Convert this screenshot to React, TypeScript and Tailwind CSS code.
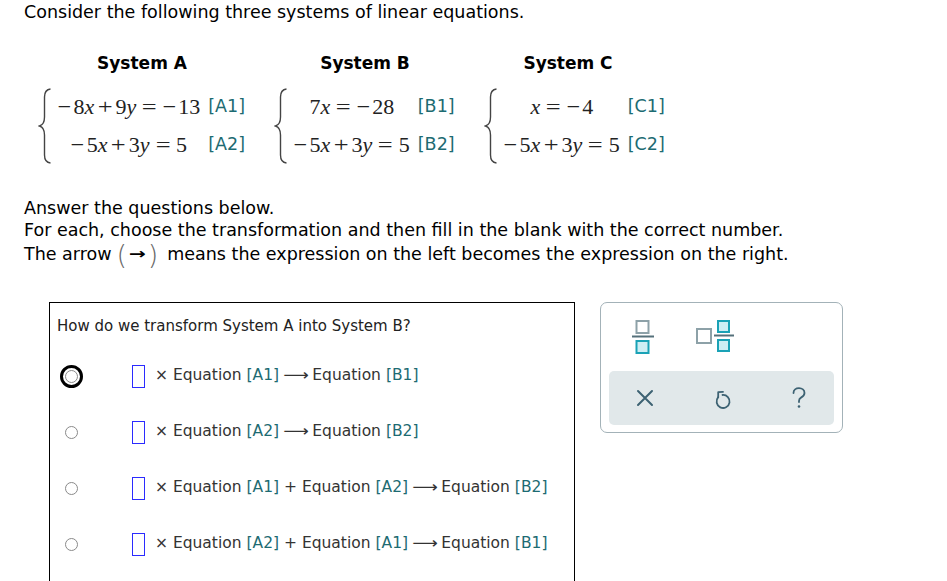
import React from "react";

const V = ({ c }: { c: string }) => <span className="italic">{c}</span>;
const Bin = ({ c }: { c: string }) => (
  <span className="mx-[4.5px] inline-block scale-x-[1.2]">{c}</span>
);
const Rel = ({ c }: { c: string }) => (
  <span className="mx-[7px] inline-block scale-x-[1.2]">{c}</span>
);
const Neg = () => <span className="mr-[3px] inline-block scale-x-[1.1]">−</span>;

const Brace = () => (
  <svg width="14" height="76" viewBox="0 0 14 76" className="shrink-0">
    <path
      d="M12.5 1 C8 1.5 6.5 4 6.5 9 L6.5 29 C6.5 34 5 37 1.5 38 C5 39 6.5 42 6.5 47 L6.5 67 C6.5 72 8 74.5 12.5 75"
      fill="none"
      stroke="#444"
      strokeWidth="1.4"
    />
  </svg>
);

const Lbl = ({ c }: { c: string }) => (
  <span className="text-[#1d6b72] text-[17.5px] font-['DejaVu_Sans',sans-serif]">{c}</span>
);

function SystemBlock({
  title,
  width,
  ml,
  rows,
}: {
  title: string;
  width: string;
  ml: string;
  rows: [React.ReactNode, string][];
}) {
  return (
    <div className={`${width} ${ml} shrink-0 flex flex-col items-center`}>
      <div className="h-[20px] leading-[20px] text-[17px] font-bold text-black whitespace-nowrap">{title}</div>
      <div className="mt-[15px] flex w-full items-stretch">
        <Brace />
        <div className="ml-[6px] grid grid-cols-[auto_auto] gap-x-[8px]">
          {rows.map(([eq, l], i) => (
            <React.Fragment key={i}>
              <div className="h-[37px] flex items-center justify-center font-['Liberation_Serif',serif] text-[22px] text-[#222] whitespace-nowrap">
                {eq}
              </div>
              <div className="h-[37px] flex items-center whitespace-nowrap">
                <Lbl c={l} />
              </div>
            </React.Fragment>
          ))}
        </div>
      </div>
    </div>
  );
}

const T = ({ c }: { c: string }) => <span className="text-[#1d6b72]">{c}</span>;

const Arrow = () => <span className="mx-[5.5px] inline-block scale-x-[1.15]">⟶</span>;

function Radio({ focused }: { focused?: boolean }) {
  return (
    <span className="relative w-[13px] h-[13px] shrink-0">
      <span className="absolute inset-0 rounded-full border border-[#8a8a8a] bg-white" />
      {focused && (
        <span className="absolute left-[-5px] top-[-5px] w-[23px] h-[23px] rounded-full border-[3px] border-black" />
      )}
    </span>
  );
}

function Option({ focused, children }: { focused?: boolean; children: React.ReactNode }) {
  return (
    <div className="h-[56px] flex items-center">
      <span className="ml-[15px] flex">
        <Radio focused={focused} />
      </span>
      <span className="ml-[54px] w-[13px] h-[23px] border border-[#2b2bff] shrink-0" />
      <span className="ml-[10px] text-[15.5px] text-[#333] whitespace-nowrap">{children}</span>
    </div>
  );
}

const FracIcon = () => (
  <svg width="22" height="34" viewBox="0 0 22 34">
    <rect x="4.5" y="1" width="12" height="12" fill="#fff" stroke="#8da1a8" strokeWidth="2" />
    <line x1="0" y1="16.5" x2="22" y2="16.5" stroke="#55707a" strokeWidth="2" />
    <rect x="4.5" y="21" width="12" height="12" fill="#cdeef4" stroke="#1aa2b6" strokeWidth="2" />
  </svg>
);

const MixedIcon = () => (
  <svg width="39" height="34" viewBox="0 0 39 34">
    <rect x="2" y="9" width="14" height="14" fill="#fff" stroke="#8da1a8" strokeWidth="2" />
    <rect x="23" y="1" width="11" height="11" fill="#cdeef4" stroke="#1aa2b6" strokeWidth="2" />
    <line x1="19" y1="15.5" x2="39" y2="15.5" stroke="#55707a" strokeWidth="2" />
    <rect x="23" y="20" width="11" height="11" fill="#cdeef4" stroke="#1aa2b6" strokeWidth="2" />
  </svg>
);

const XIcon = () => (
  <svg width="18" height="18" viewBox="0 0 18 18">
    <path d="M2 2 L16 16 M16 2 L2 16" stroke="#3d6273" strokeWidth="2" strokeLinecap="round" />
  </svg>
);

const UndoIcon = () => (
  <svg width="20" height="20" viewBox="0 0 20 20">
    <path
      d="M6.2 7.2 A6.5 6.5 0 1 0 10.5 5"
      fill="none"
      stroke="#3d6273"
      strokeWidth="1.8"
      strokeLinecap="round"
    />
    <path d="M11 1.8 L6.2 2.2 L6.2 7.2" fill="none" stroke="#3d6273" strokeWidth="1.8" strokeLinecap="round" strokeLinejoin="round" />
  </svg>
);

const HelpIcon = () => (
  <svg width="16" height="22" viewBox="0 0 16 22">
    <path
      d="M2.5 6 C2.5 3 5 1.2 8 1.2 C11 1.2 13.5 3.2 13.5 6 C13.5 8.5 11.8 9.6 10 10.6 C8.6 11.4 8 12.3 8 14 L8 15"
      fill="none"
      stroke="#3d6273"
      strokeWidth="1.8"
      strokeLinecap="round"
    />
    <circle cx="8" cy="19.5" r="1.3" fill="#3d6273" />
  </svg>
);

export default function App() {
  return (
    <div className="w-[947px] h-[581px] overflow-hidden bg-white text-black font-['DejaVu_Sans',sans-serif]">
      <div className="pl-[24px] h-[24px] leading-[24px] text-[17.5px]">
        Consider the following three systems of linear equations.
      </div>

      <div className="mt-[29px] flex">
        <SystemBlock
          title="System A"
          width="w-[208px]"
          ml="ml-[38px]"
          rows={[
            [
              <>
                <Neg />8<V c="x" />
                <Bin c="+" />9<V c="y" />
                <Rel c="=" />
                <Neg />13
              </>,
              "[A1]",
            ],
            [
              <>
                <Neg />5<V c="x" />
                <Bin c="+" />3<V c="y" />
                <Rel c="=" />5
              </>,
              "[A2]",
            ],
          ]}
        />
        <SystemBlock
          title="System B"
          width="w-[182px]"
          ml="ml-[28px]"
          rows={[
            [
              <>
                7<V c="x" />
                <Rel c="=" />
                <Neg />28
              </>,
              "[B1]",
            ],
            [
              <>
                <Neg />5<V c="x" />
                <Bin c="+" />3<V c="y" />
                <Rel c="=" />5
              </>,
              "[B2]",
            ],
          ]}
        />
        <SystemBlock
          title="System C"
          width="w-[168px]"
          ml="ml-[28px]"
          rows={[
            [
              <>
                <V c="x" />
                <Rel c="=" />
                <Neg />4
              </>,
              "[C1]",
            ],
            [
              <>
                <Neg />5<V c="x" />
                <Bin c="+" />3<V c="y" />
                <Rel c="=" />5
              </>,
              "[C2]",
            ],
          ]}
        />
      </div>

      <div className="mt-[33px] pl-[24px] text-[17.5px] text-black">
        <div className="h-[22px] leading-[22px]">Answer the questions below.</div>
        <div className="h-[22px] leading-[22px]">
          For each, choose the transformation and then fill in the blank with the correct number.
        </div>
        <div className="h-[26px] flex items-center whitespace-nowrap">
          <span>The arrow</span>
          <span className="ml-[5px] text-[27px] leading-none text-[#666] font-extralight">(</span>
          <span className="text-[15px] font-bold mx-[4px] inline-block scale-x-[1.35]">→</span>
          <span className="text-[27px] leading-none text-[#666] font-extralight">)</span>
          <span className="ml-[9px]">means the expression on the left becomes the expression on the right.</span>
        </div>
      </div>

      <div className="mt-[35px] flex items-start">
        <div className="ml-[49px] w-[526px] h-[300px] border border-black">
          <div className="pt-[14px] pl-[7px] h-[18px] box-content leading-[18px] text-[15px] text-[#222]">
            How do we transform System A into System B?
          </div>
          <div className="mt-[13px]">
            <Option focused>
              × Equation <T c="[A1]" />
              <Arrow />
              Equation <T c="[B1]" />
            </Option>
            <Option>
              × Equation <T c="[A2]" />
              <Arrow />
              Equation <T c="[B2]" />
            </Option>
            <Option>
              × Equation <T c="[A1]" /> + Equation <T c="[A2]" />
              <Arrow />
              Equation <T c="[B2]" />
            </Option>
            <Option>
              × Equation <T c="[A2]" /> + Equation <T c="[A1]" />
              <Arrow />
              Equation <T c="[B1]" />
            </Option>
          </div>
        </div>

        <div className="ml-[25px] w-[243px] h-[131px] rounded-[7px] border border-[#a3b2b8] flex flex-col">
          <div className="h-[68px] flex items-start pt-[17px]">
            <span className="ml-[31px]">
              <FracIcon />
            </span>
            <span className="ml-[41px]">
              <MixedIcon />
            </span>
          </div>
          <div className="mx-[8px] h-[54px] rounded-[5px] bg-[#e1e8ea] flex items-center">
            <span className="ml-[27px] flex">
              <XIcon />
            </span>
            <span className="ml-[58px] flex mt-[4px]">
              <UndoIcon />
            </span>
            <span className="ml-[59px] flex">
              <HelpIcon />
            </span>
          </div>
        </div>
      </div>
    </div>
  );
}
